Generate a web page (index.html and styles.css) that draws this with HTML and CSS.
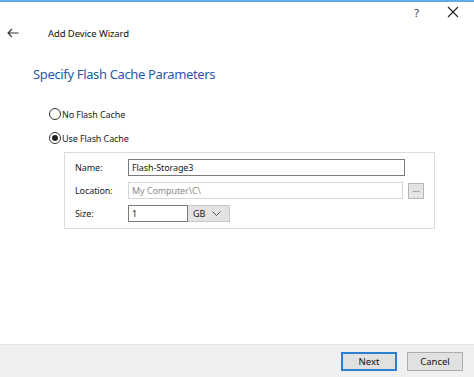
FILE: index.html
```html
<!DOCTYPE html>
<html lang="en">
<head>
    <meta charset="UTF-8">
    <title>Add Device Wizard</title>
    <link rel="stylesheet" href="styles.css">
</head>
<body>
    <div class="window">
        <div class="accent"></div>
        <div class="caption">
            <span class="help">?</span>
            <svg class="close" width="12" height="12" viewBox="0 0 12 12">
                <path d="M1 1 L11 11 M11 1 L1 11" stroke="#222" stroke-width="1.1" fill="none"/>
            </svg>
        </div>
        <div class="header">
            <svg class="back" width="12" height="10" viewBox="0 0 12 10">
                <path d="M11.5 5 H1 M5 1 L1 5 L5 9" stroke="#333" stroke-width="1.1" fill="none"/>
            </svg>
            <span class="wizard-title">Add Device Wizard</span>
        </div>

        <div class="content">
            <h1>Specify Flash Cache Parameters</h1>

            <label class="radio">
                <span class="dot"></span>
                No Flash Cache
            </label>
            <label class="radio">
                <span class="dot checked"></span>
                Use Flash Cache
            </label>

            <div class="group">
                <div class="row">
                    <span class="label">Name:</span>
                    <div class="input focused">Flash-Storage3</div>
                </div>
                <div class="row">
                    <span class="label">Location:</span>
                    <div class="input disabled location">My Computer\C\</div>
                    <div class="browse">...</div>
                </div>
                <div class="row">
                    <span class="label">Size:</span>
                    <div class="input size">1</div>
                    <div class="select">
                        <span>GB</span>
                        <svg width="9" height="6" viewBox="0 0 9 6">
                            <path d="M0.5 0.5 L4.5 4.5 L8.5 0.5" stroke="#555" stroke-width="1" fill="none"/>
                        </svg>
                    </div>
                </div>
            </div>
        </div>

        <div class="footer">
            <button class="btn primary">Next</button>
            <button class="btn">Cancel</button>
        </div>
    </div>
</body>
</html>
```

FILE: styles.css
```css
* {
    margin: 0;
    padding: 0;
    box-sizing: border-box;
}

body {
    font-family: "Noto Sans", "Open Sans", sans-serif;
    font-size: 9px;
    letter-spacing: -0.1px;
    color: #1a1a1a;
    background-color: #fff;
}

.window {
    width: 474px;
    height: 377px;
    display: flex;
    flex-direction: column;
}

.accent {
    height: 2px;
    background-color: #64a8e6;
}

.caption {
    height: 20px;
    display: flex;
    justify-content: flex-end;
    align-items: center;
    gap: 28px;
    padding-right: 15px;
}

.help {
    font-size: 11px;
    color: #333;
}

.header {
    height: 22px;
    display: flex;
    align-items: center;
    padding-left: 7px;
}

.back {
    margin-right: 29px;
}

.wizard-title {
    font-size: 9.5px;
    color: #111;
}

.content {
    flex: 1;
    padding: 21px 0 0 33px;
}

h1 {
    font-size: 13px;
    letter-spacing: -0.35px;
    font-weight: normal;
    color: #2b58a6;
    margin-bottom: 25px;
}

.radio {
    display: flex;
    align-items: center;
    gap: 1px;
    margin-left: 16px;
    height: 12px;
    margin-bottom: 12px;
}

.dot {
    width: 12px;
    height: 12px;
    border: 1px solid #333;
    border-radius: 50%;
    display: flex;
    align-items: center;
    justify-content: center;
}

.dot.checked::after {
    content: "";
    width: 6px;
    height: 6px;
    border-radius: 50%;
    background-color: #222;
}

.group {
    margin: -4px 0 0 31px;
    width: 371px;
    border: 1px solid #dcdcdc;
    padding: 6px 0 6px 10px;
    display: flex;
    flex-direction: column;
    gap: 6px;
}

.row {
    display: flex;
    align-items: center;
    height: 17px;
}

.label {
    width: 53px;
}

.input {
    height: 17px;
    width: 277px;
    border: 1px solid #d6d6d6;
    padding-left: 3px;
    display: flex;
    align-items: center;
}

.input.focused {
    border-color: #7a7a7a;
}

.input.disabled {
    color: #8c8c8c;
}

.input.location {
    width: 275px;
}

.browse {
    margin-left: 5px;
    width: 16px;
    height: 16px;
    border: 1px solid #b5b5b5;
    background-color: #e4e4e4;
    color: #555;
    font-size: 9px;
    line-height: 10px;
    text-align: center;
}

.input.size {
    width: 60px;
    border-color: #7a7a7a;
}

.select {
    width: 42px;
    height: 17px;
    background-color: #e3e3e3;
    border: 1px solid #c8c8c8;
    border-left: none;
    display: flex;
    align-items: center;
    justify-content: space-between;
    padding: 0 8px 0 5px;
}

.footer {
    height: 33px;
    background-color: #f0f0f0;
    border-top: 1px solid #e6e6e6;
    display: flex;
    justify-content: flex-end;
    align-items: center;
    gap: 10px;
    padding-right: 11px;
}

.btn {
    width: 56px;
    height: 19px;
    font-family: inherit;
    font-size: 9.5px;
    color: #111;
    background-color: #e1e1e1;
    border: 1px solid #adadad;
}

.btn.primary {
    border: 2px solid #2f7fd0;
}
```
